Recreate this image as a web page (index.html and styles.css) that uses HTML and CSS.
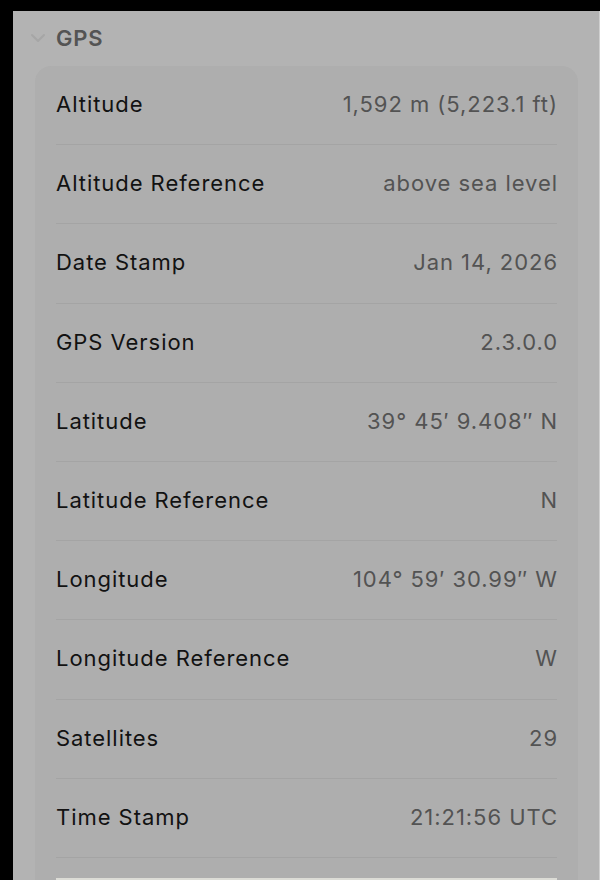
FILE: index.html
```html
<!DOCTYPE html>
<html>
<head>
    <title>GPS Metadata</title>
    <link rel="stylesheet" href="styles.css">
</head>
<body>
    <div class="window">
        <div class="panel">
            <div class="section-header">
                <svg class="chevron" width="16" height="10" viewBox="0 0 16 10">
                    <path d="M2 2 L8 8 L14 2" fill="none" stroke="#a6a6a6" stroke-width="2" stroke-linecap="round" stroke-linejoin="round"/>
                </svg>
                <span class="section-title">GPS</span>
            </div>
            <div class="card">
                <div class="row"><span class="label">Altitude</span><span class="value">1,592 m (5,223.1 ft)</span></div>
                <div class="row"><span class="label">Altitude Reference</span><span class="value">above sea level</span></div>
                <div class="row"><span class="label">Date Stamp</span><span class="value">Jan 14, 2026</span></div>
                <div class="row"><span class="label">GPS Version</span><span class="value">2.3.0.0</span></div>
                <div class="row"><span class="label">Latitude</span><span class="value">39° 45′ 9.408″ N</span></div>
                <div class="row"><span class="label">Latitude Reference</span><span class="value">N</span></div>
                <div class="row"><span class="label">Longitude</span><span class="value">104° 59′ 30.99″ W</span></div>
                <div class="row"><span class="label">Longitude Reference</span><span class="value">W</span></div>
                <div class="row"><span class="label">Satellites</span><span class="value">29</span></div>
                <div class="row"><span class="label">Time Stamp</span><span class="value">21:21:56 UTC</span></div>
                <div class="row-gap"></div>
                <div class="next-field"></div>
            </div>
        </div>
    </div>
</body>
</html>
```

FILE: styles.css
```css
html, body {
    margin: 0;
    padding: 0;
    height: 100%;
    overflow: hidden;
}
body {
    background-color: #000;
    font-family: Inter, "Noto Sans", sans-serif;
}
.window {
    padding: 11px 0 0 13px;
    height: 100%;
    box-sizing: border-box;
}
.panel {
    background-color: #b3b3b3;
    border-right: 1px solid #cfcfcf;
    height: 100%;
    padding: 0 21px 0 22px;
}
.section-header {
    display: flex;
    align-items: center;
    height: 55px;
    padding-bottom: 1px;
    box-sizing: border-box;
}
.chevron {
    margin-left: -5px;
    margin-right: 10px;
}
.section-title {
    font-size: 22px;
    font-weight: 600;
    letter-spacing: 0.8px;
    color: #545454;
}
.card {
    background-color: #aeaeae;
    border-radius: 16px;
    padding: 0 21px;
}
.row {
    display: flex;
    justify-content: space-between;
    align-items: center;
    height: 79.2px;
    box-sizing: border-box;
    padding-bottom: 2px;
    border-bottom: 1px solid #a4a4a4;
    font-size: 22px;
    letter-spacing: 0.95px;
}
.label {
    color: #121212;
}
.value {
    color: #535353;
    margin-right: -1px;
}
.row-gap {
    height: 20px;
}
.next-field {
    height: 40px;
    background-color: #dcdcd6;
}
```
